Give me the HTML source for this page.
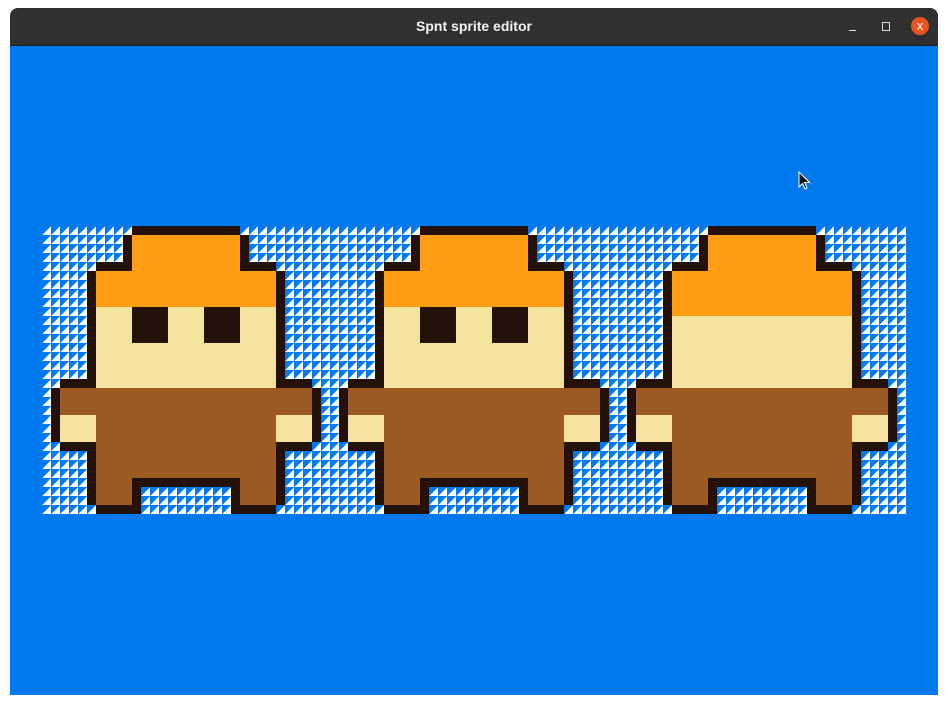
<!DOCTYPE html>
<html><head><meta charset="utf-8"><style>
html,body{margin:0;padding:0;background:#fff;width:948px;height:705px;overflow:hidden;}
#win{position:absolute;left:10px;top:8px;width:928px;height:687px;border-radius:8px 8px 0 0;overflow:hidden;background:#0079ee;}
#tb{position:absolute;left:0;top:0;width:928px;height:37px;background:#303030;border-bottom:1px solid #1e1e1e;}
#title{position:absolute;left:0;width:928px;top:10px;text-align:center;color:#f2f2f2;font:bold 14px "Liberation Sans",sans-serif;}
#min{position:absolute;left:839px;top:22px;width:7px;height:1px;background:#ddd;}
#max{position:absolute;left:872px;top:14px;width:6px;height:7px;border:1px solid #ddd;}
#cls{position:absolute;left:901px;top:9px;width:18px;height:18px;border-radius:50%;background:#e95420;color:#fff;font:13px "Liberation Sans",sans-serif;text-align:center;line-height:18px;}
#sp{position:absolute;left:42px;top:226px;width:864px;height:288px;
background-color:#0079ee;background-image:linear-gradient(to bottom right,#0079ee 50%,#fff 50%);background-size:9px 9px;}
#sp div{position:absolute;width:9px;height:9px;}
#cur{position:absolute;left:798px;top:171px;}
</style></head><body>
<div id="win"><div id="tb"><div id="title">Spnt sprite editor</div><div id="min"></div><div id="max"></div><div id="cls">x</div></div></div>
<div id="sp"></div>
<svg id="cur" width="14" height="20" viewBox="0 0 14 20"><path d="M1 1 L1 16 L4.5 12.5 L7 18 L9 17 L6.5 11.5 L11.5 11.5 Z" fill="#111" stroke="#fff" stroke-width="1"/></svg>
<script>
var C={d:'#241109',o:'#fd9e16',s:'#f5e4a0',b:'#9b5a22'};
function spr(eyes,orangeEnd){
 var g=[];for(var r=0;r<32;r++){g.push(new Array(32).fill(null));}
 function f(r,a,b,c){for(var x=a;x<=b;x++)g[r][x]=c;}
 f(0,10,21,'d');
 for(var r=1;r<=3;r++){f(r,9,9,'d');f(r,10,21,'o');f(r,22,22,'d');}
 f(4,6,9,'d');f(4,10,21,'o');f(4,22,25,'d');
 for(r=5;r<=16;r++){f(r,5,5,'d');f(r,6,25,r<=orangeEnd?'o':'s');f(r,26,26,'d');}
 if(eyes){for(r=9;r<=12;r++){f(r,10,13,'d');f(r,18,21,'d');}}
 f(17,2,5,'d');f(17,6,25,'s');f(17,26,29,'d');
 for(r=18;r<=20;r++){f(r,1,1,'d');f(r,2,29,'b');f(r,30,30,'d');}
 for(r=21;r<=23;r++){f(r,1,1,'d');f(r,2,5,'s');f(r,6,25,'b');f(r,26,29,'s');f(r,30,30,'d');}
 f(24,2,5,'d');f(24,6,25,'b');f(24,26,29,'d');
 for(r=25;r<=27;r++){f(r,5,5,'d');f(r,6,25,'b');f(r,26,26,'d');}
 f(28,5,5,'d');f(28,6,9,'b');f(28,10,21,'d');f(28,22,25,'b');f(28,26,26,'d');
 for(r=29;r<=30;r++){f(r,5,5,'d');f(r,6,9,'b');f(r,10,10,'d');f(r,21,21,'d');f(r,22,25,'b');f(r,26,26,'d');}
 f(31,6,10,'d');f(31,21,25,'d');
 return g;
}
var sp=document.getElementById('sp'),h='';
[spr(1,8),spr(1,8),spr(0,9)].forEach(function(g,i){
 for(var r=0;r<32;r++)for(var x=0;x<32;x++){var c=g[r][x];if(c)h+='<div style="left:'+(i*288+x*9)+'px;top:'+(r*9)+'px;background:'+C[c]+'"></div>';}
});
sp.innerHTML=h;
</script>
</body></html>
